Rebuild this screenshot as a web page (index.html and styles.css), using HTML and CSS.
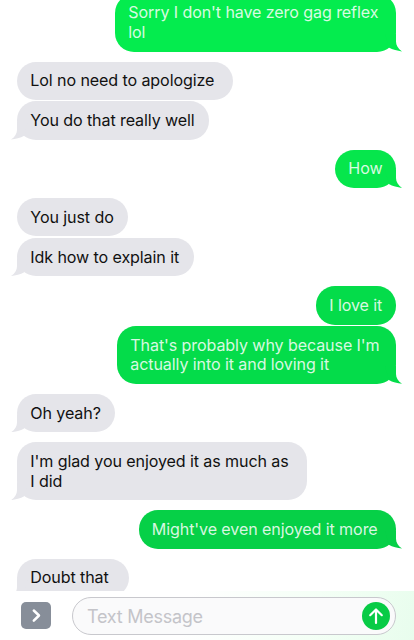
FILE: index.html
```html
<!DOCTYPE html>
<html lang="en">
<head>
  <meta charset="UTF-8">
  <title>Messages</title>
  <link rel="stylesheet" href="styles.css">
</head>
<body>
  <div class="phone">
    <div class="chat">
      <div class="msg me green1 tail w-sorry"><span>Sorry I don't have zero gag reflex<br>lol</span></div>
      <div class="msg them w-lol"><span>Lol no need to apologize</span></div>
      <div class="msg them tail next w-well"><span>You do that really well</span></div>
      <div class="msg me green2 tail w-how"><span>How</span></div>
      <div class="msg them w-just"><span>You just do</span></div>
      <div class="msg them tail next w-idk"><span>Idk how to explain it</span></div>
      <div class="msg me green3 w-love"><span>I love it</span></div>
      <div class="msg me green3 tail next w-thats"><span>That's probably why because I'm<br>actually into it and loving it</span></div>
      <div class="msg them tail w-yeah"><span>Oh yeah?</span></div>
      <div class="msg them tail w-glad"><span>I'm glad you enjoyed it as much as<br>I did</span></div>
      <div class="msg me green4 tail w-might"><span>Might've even enjoyed it more</span></div>
      <div class="msg them tail w-doubt"><span>Doubt that</span></div>
    </div>

    <div class="bar">
      <button class="apps">
        <svg width="30" height="27" viewBox="0 0 30 27"><path d="M12.8 8.5l5.2 5-5.2 5.2" fill="none" stroke="#fff" stroke-width="2.5" stroke-linecap="round" stroke-linejoin="round"/></svg>
      </button>
      <div class="field">
        <span class="placeholder">Text Message</span>
        <button class="send">
          <svg width="28" height="28" viewBox="0 0 28 28"><path d="M14 21V8.3M8.2 13.2L14 7.5l5.8 5.7" fill="none" stroke="#fff" stroke-width="2.2" stroke-linecap="round" stroke-linejoin="round"/></svg>
        </button>
      </div>
    </div>
  </div>
</body>
</html>
```
FILE: styles.css
```css
* {
  box-sizing: border-box;
}
body {
  margin: 0;
  background: #fff;
  font-family: Inter, "Liberation Sans", sans-serif;
}
.phone {
  width: 414px;
  height: 640px;
  display: flex;
  flex-direction: column;
  overflow: hidden;
}
/* newest messages sit under the input bar, the oldest run off the top */
.chat {
  height: 591px;
  flex: none;
  overflow: hidden;
  display: flex;
  flex-direction: column;
  align-items: flex-start;
  padding: 0 18px 0 17px;
}
.msg {
  position: relative;
  flex: none;
  margin-top: 10.1px;
  padding: 9.6px 0 9.1px 13.3px;
  border-radius: 19px;
  font-size: 16.1px;
  line-height: 19.6px;
  letter-spacing: -0.11px;
  white-space: nowrap;
}
.msg span {
  display: block;
}
.msg.next {
  margin-top: 1.5px;
}
.them {
  background: #e5e5ea;
  color: #111;
}
.me {
  align-self: flex-end;
  color: rgba(255, 255, 255, 0.85);
}
.green1 { background: #04ec4e; }
.green2 { background: #06e64c; }
.green3 { background: #04dc4a; }
.green4 { background: #06d047; }

.tail::after {
  content: "";
  position: absolute;
  bottom: 0;
  left: -6px;
  width: 18px;
  height: 18px;
  background: inherit;
  clip-path: path("M6 0L6 8C6 12 4 15 0 17.8C4.5 17.5 9.5 16 13.2 14L17 0Z");
}
.me.tail::after {
  left: auto;
  right: -6px;
  transform: scaleX(-1);
}

.w-sorry { width: 281px; margin-top: -6.3px; }
.w-lol { width: 216px; }
.w-well { width: 192px; }
.w-how { width: 61px; }
.w-just { width: 110.5px; }
.w-idk { width: 177px; }
.w-love { width: 80px; }
.w-thats { width: 279px; }
.w-yeah { width: 98px; }
.w-glad { width: 290px; }
.w-might { width: 257.5px; }
.w-doubt { width: 112px; }

.bar {
  flex: 1;
  display: flex;
  align-items: flex-start;
  justify-content: space-between;
  padding: 6px 18px 0 20.5px;
  background: linear-gradient(105deg, #fff 45%, #f4fff6 75%, #e8fded);
}
button {
  padding: 0;
  border: none;
  display: flex;
}
.apps {
  width: 30.5px;
  height: 27px;
  margin-top: 5px;
  border-radius: 5px;
  background: #878e99;
}
.field {
  width: 324px;
  height: 38px;
  display: flex;
  align-items: center;
  justify-content: space-between;
  padding: 0 5px 0 14px;
  border: 1px solid #c8c8cd;
  border-radius: 19px;
  background: #fafafb;
}
.placeholder {
  color: #c4c4c9;
  font-size: 18px;
  letter-spacing: -0.25px;
}
.send {
  width: 28px;
  height: 28px;
  border-radius: 50%;
  background: #08cb46;
}
```
